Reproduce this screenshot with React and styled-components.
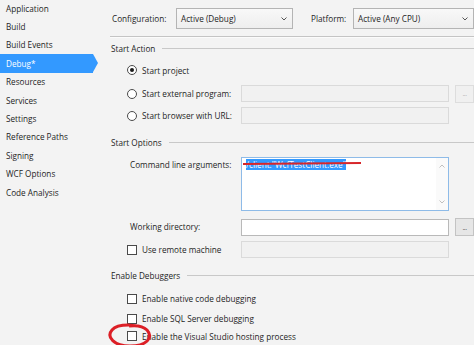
import React from 'react'
import styled, { createGlobalStyle } from 'styled-components'

const GlobalStyle = createGlobalStyle`
  html, body {
    margin: 0;
    padding: 0;
  }
  body {
    width: 474px;
    height: 345px;
    overflow: hidden;
    background: #f3f3f3;
    font-family: "Open Sans", "Noto Sans", sans-serif;
    font-size: 8.2px;
    color: #1e1e1e;
  }
`

const navItems = [
  'Application',
  'Build',
  'Build Events',
  'Debug*',
  'Resources',
  'Services',
  'Settings',
  'Reference Paths',
  'Signing',
  'WCF Options',
  'Code Analysis',
]

const Chevron = ({ up }) => (
  <svg width="6" height="4" viewBox="0 0 6 4">
    <polyline
      points={up ? '0.5,3.5 3,1 5.5,3.5' : '0.5,0.5 3,3 5.5,0.5'}
      fill="none"
      stroke="currentColor"
      strokeWidth="1"
    />
  </svg>
)

const App = () => {
  return (
    <>
      <GlobalStyle />
      <Window>
        <Sidebar>
          {navItems.map((item) => (
            <NavItem key={item} $active={item === 'Debug*'}>
              {item}
            </NavItem>
          ))}
        </Sidebar>

        <Main>
          <TopBar>
            <TopLabel $w={64}>Configuration:</TopLabel>
            <Select $w={117}>
              <span>Active (Debug)</span>
              <Chevron />
            </Select>
            <TopLabel $w={42} $ml={18}>Platform:</TopLabel>
            <Select $w={121}>
              <span>Active (Any CPU)</span>
              <Chevron />
            </Select>
          </TopBar>
          <Rule />

          <SectionHeader $mt={3}>
            <span>Start Action</span>
          </SectionHeader>
          <Row $mt={7} $h={16}>
            <ChoiceCell>
              <Radio $checked />
              <span>Start project</span>
            </ChoiceCell>
          </Row>
          <Row $mt={7} $h={17}>
            <ChoiceCell>
              <Radio />
              <span>Start external program:</span>
            </ChoiceCell>
            <TextBox $disabled />
            <BrowseButton $disabled>...</BrowseButton>
          </Row>
          <Row $mt={5} $h={17}>
            <ChoiceCell>
              <Radio />
              <span>Start browser with URL:</span>
            </ChoiceCell>
            <TextBox $disabled />
          </Row>

          <SectionHeader $mt={11}>
            <span>Start Options</span>
          </SectionHeader>
          <Row $mt={8} $h={54} $top>
            <LabelCell $pt={2}>Command line arguments:</LabelCell>
            <TextArea>
              <ArgText>
                <Selected>/client:"WcfTestClient.exe"</Selected>
              </ArgText>
              <ScrollTrack>
                <Chevron up />
                <Chevron />
              </ScrollTrack>
            </TextArea>
          </Row>
          <Row $mt={7} $h={18}>
            <LabelCell>Working directory:</LabelCell>
            <TextBox />
            <BrowseButton>...</BrowseButton>
          </Row>
          <Row $mt={5} $h={17}>
            <ChoiceCell>
              <Checkbox />
              <span>Use remote machine</span>
            </ChoiceCell>
            <TextBox $disabled />
          </Row>

          <SectionHeader $mt={10}>
            <span>Enable Debuggers</span>
          </SectionHeader>
          <Row $mt={7} $h={19}>
            <ChoiceCell>
              <Checkbox />
              <span>Enable native code debugging</span>
            </ChoiceCell>
          </Row>
          <Row $mt={1} $h={19}>
            <ChoiceCell>
              <Checkbox />
              <span>Enable SQL Server debugging</span>
            </ChoiceCell>
          </Row>
          <Row $mt={0} $h={16}>
            <ChoiceCell>
              <Checkbox />
              <span>Enable the Visual Studio hosting process</span>
            </ChoiceCell>
          </Row>
        </Main>

        {/* red marker annotations drawn over the screenshot */}
        <Markup width="474" height="345" viewBox="0 0 474 345">
          <line x1="243" y1="164" x2="361" y2="163" stroke="#d7262a" strokeWidth="2" />
          <path
            d="M147 330 C141 324 118 323 112 330 C106 337 114 346 130 346 C146 346 154 338 147 330 C144 327 137 325 129 326"
            fill="none"
            stroke="#dc1f26"
            strokeWidth="3"
          />
        </Markup>
      </Window>
    </>
  )
}

const Window = styled.div`
  position: relative;
  display: flex;
  width: 474px;
  height: 345px;
  overflow: hidden;
`

const Sidebar = styled.div`
  width: 98px;
  flex-shrink: 0;
  display: flex;
  flex-direction: column;
  margin-top: -1px;
`

const NavItem = styled.div`
  position: relative;
  height: 18.4px;
  width: 93px;
  padding-left: 6px;
  box-sizing: border-box;
  display: flex;
  align-items: center;
  white-space: nowrap;
  color: ${(p) => (p.$active ? '#ffffff' : '#1e1e1e')};
  background: ${(p) => (p.$active ? '#3399ff' : 'transparent')};

  &::after {
    content: '';
    display: ${(p) => (p.$active ? 'block' : 'none')};
    position: absolute;
    right: -5px;
    top: 0;
    border-left: 5px solid #3399ff;
    border-top: 9.2px solid transparent;
    border-bottom: 9.2px solid transparent;
  }
`

const Main = styled.div`
  flex: 1;
  min-width: 0;
  padding-left: 12px;
  display: flex;
  flex-direction: column;
`

const TopBar = styled.div`
  display: flex;
  align-items: center;
  height: 21px;
  margin-top: 8px;
`

const TopLabel = styled.div`
  width: ${(p) => p.$w}px;
  margin-left: ${(p) => p.$ml || 2}px;
  flex-shrink: 0;
  white-space: nowrap;
`

const Select = styled.div`
  width: ${(p) => p.$w}px;
  height: 21px;
  box-sizing: border-box;
  flex-shrink: 0;
  display: flex;
  align-items: center;
  justify-content: space-between;
  padding: 0 5px 0 4px;
  border: 1px solid #b4b4b4;
  background: linear-gradient(#f8f8f8, #eeeeee);
  color: #1e1e1e;

  svg {
    color: #555;
  }
`

const Rule = styled.div`
  height: 1px;
  margin-top: 7px;
  background: #c4c4c4;
  border-bottom: 1px solid #fbfbfb;
`

const SectionHeader = styled.div`
  display: flex;
  align-items: center;
  height: 14px;
  margin-top: ${(p) => p.$mt}px;
  padding-left: 1px;
  white-space: nowrap;

  &::after {
    content: '';
    flex: 1;
    height: 1px;
    margin-left: 7px;
    background: #c8c8c8;
  }
`

const Row = styled.div`
  display: flex;
  align-items: ${(p) => (p.$top ? 'flex-start' : 'center')};
  height: ${(p) => p.$h}px;
  margin-top: ${(p) => p.$mt}px;
  flex-shrink: 0;
`

const ChoiceCell = styled.div`
  width: 131px;
  flex-shrink: 0;
  display: flex;
  align-items: center;
  gap: 5px;
  padding-left: 17px;
  box-sizing: border-box;
  white-space: nowrap;
`

const LabelCell = styled.div`
  width: 131px;
  flex-shrink: 0;
  padding-left: 20px;
  padding-top: ${(p) => p.$pt || 0}px;
  box-sizing: border-box;
  line-height: 12px;
  white-space: nowrap;
`

const Radio = styled.span`
  width: 10px;
  height: 10px;
  box-sizing: border-box;
  border-radius: 50%;
  border: 1px solid #4a4a4a;
  background: #fff;
  flex-shrink: 0;
  display: flex;
  align-items: center;
  justify-content: center;

  &::after {
    content: '';
    display: ${(p) => (p.$checked ? 'block' : 'none')};
    width: 4px;
    height: 4px;
    border-radius: 50%;
    background: #1a1a1a;
  }
`

const Checkbox = styled.span`
  width: 10px;
  height: 10px;
  box-sizing: border-box;
  border: 1px solid #4a4a4a;
  background: #fff;
  flex-shrink: 0;
`

const TextBox = styled.div`
  width: 208px;
  height: 17px;
  box-sizing: border-box;
  flex-shrink: 0;
  border: 1px solid ${(p) => (p.$disabled ? '#dadada' : '#b9b9b9')};
  background: ${(p) => (p.$disabled ? '#f1f1f1' : '#ffffff')};
`

const BrowseButton = styled.div`
  width: 19px;
  height: 18px;
  margin-left: 6px;
  box-sizing: border-box;
  flex-shrink: 0;
  display: flex;
  align-items: center;
  justify-content: center;
  font-size: 7px;
  letter-spacing: -0.5px;
  border: 1px solid ${(p) => (p.$disabled ? '#dddddd' : '#c3c3c3')};
  background: ${(p) => (p.$disabled ? '#f0f0f0' : '#e6e6e6')};
  color: ${(p) => (p.$disabled ? '#b5b5b5' : '#555555')};
`

const TextArea = styled.div`
  width: 208px;
  height: 54px;
  box-sizing: border-box;
  flex-shrink: 0;
  display: flex;
  border: 1px solid #8ebbe8;
  background: #ffffff;
`

const ArgText = styled.div`
  flex: 1;
  padding: 2px 0 0 4px;
  line-height: 9px;
  white-space: nowrap;
`

const Selected = styled.span`
  background: #3399ff;
  color: #ffffff;
`

const ScrollTrack = styled.div`
  width: 12px;
  display: flex;
  flex-direction: column;
  align-items: center;
  justify-content: space-between;
  padding: 6px 0 6px;
  box-sizing: border-box;
  background: #fafafa;
  color: #c0c0c0;
`

const Markup = styled.svg`
  position: absolute;
  left: 0;
  top: 0;
  pointer-events: none;
`

export default App
